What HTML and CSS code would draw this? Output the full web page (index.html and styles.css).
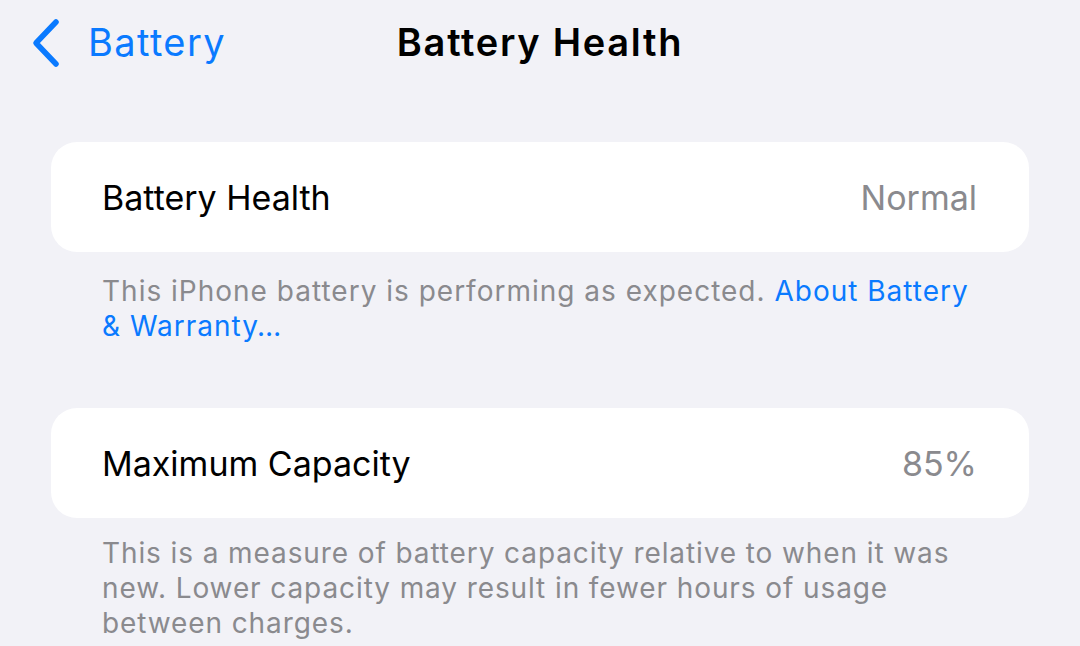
FILE: index.html
```html
<!DOCTYPE html>
<html lang="en">
<head>
    <meta charset="UTF-8">
    <meta name="viewport" content="width=device-width, initial-scale=1.0">
    <title>Battery Health</title>
    <link rel="stylesheet" href="styles.css">
</head>
<body>

    <header class="nav-bar">
        <a href="#" class="back-link">
            <svg class="back-chevron" viewBox="0 0 30 50" width="30" height="50" aria-hidden="true">
                <path d="M25 4 L5 25 L25 46" fill="none" stroke="currentColor" stroke-width="5.5" stroke-linecap="round" stroke-linejoin="round"/>
            </svg>
            <span>Battery</span>
        </a>
        <h1 class="nav-title">Battery Health</h1>
        <div></div>
    </header>

    <main class="content">
        <section class="group">
            <div class="card">
                <span class="row-label">Battery Health</span>
                <span class="row-value">Normal</span>
            </div>
            <p class="footer">This iPhone battery is performing as expected. <a href="#" class="link">About Battery &amp; Warranty…</a></p>
        </section>

        <section class="group group-capacity">
            <div class="card">
                <span class="row-label">Maximum Capacity</span>
                <span class="row-value">85%</span>
            </div>
            <p class="footer">This is a measure of battery capacity relative to when it was new. Lower capacity may result in fewer hours of usage between charges.</p>
        </section>
    </main>

</body>
</html>
```

FILE: styles.css
```css
:root {
    --background-color: #f2f2f7;
    --card-background: #fff;
    --text-color: #000;
    --secondary-color: #8a8a8e;
    --link-color: #0a7aff;
}
body {
    font-family: Inter, "Noto Sans", sans-serif;
    background-color: var(--background-color);
    color: var(--text-color);
    margin: 0;
    padding: 0;
}
.nav-bar {
    display: grid;
    grid-template-columns: 1fr auto 1fr;
    align-items: center;
    height: 86px;
}
.back-link {
    justify-self: start;
    display: flex;
    align-items: center;
    gap: 27px;
    margin-left: 31px;
    color: var(--link-color);
    text-decoration: none;
    font-size: 38px;
    line-height: 1.2;
    letter-spacing: 1.4px;
}
.back-chevron {
    display: block;
    flex-shrink: 0;
}
.nav-title {
    margin: 0;
    font-size: 38px;
    font-weight: 600;
    line-height: 1.2;
    letter-spacing: 1.7px;
}
.content {
    padding: 0 51px;
}
.group {
    margin-top: 56px;
}
.group-capacity {
    margin-top: 64px;
}
.card {
    display: flex;
    align-items: center;
    justify-content: space-between;
    height: 110px;
    padding: 0 52px 0 51px;
    background-color: var(--card-background);
    border-radius: 26px;
    font-size: 34px;
}
.row-value {
    color: var(--secondary-color);
}
.footer {
    margin: 22px 0 0;
    padding: 0 51px;
    font-size: 28px;
    line-height: 35px;
    letter-spacing: 1px;
    color: var(--secondary-color);
}
.group-capacity .footer {
    margin-top: 18px;
    letter-spacing: 0.9px;
}
.link {
    color: var(--link-color);
    text-decoration: none;
}
```
